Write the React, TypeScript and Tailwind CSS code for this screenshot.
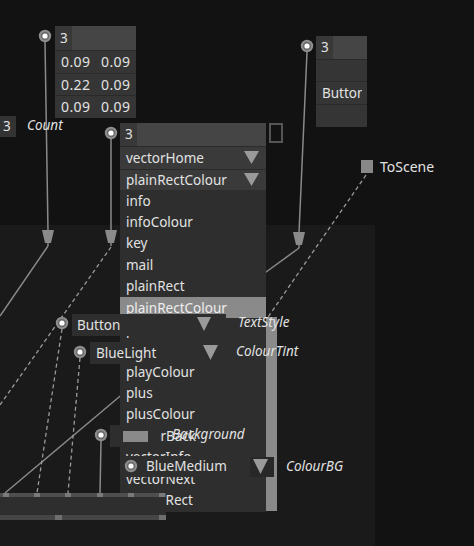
import React from "react";

const font = { fontFamily: '"Noto Sans", "DejaVu Sans", sans-serif' };

function Tri({ x, y, w = 15, h = 13 }: { x: number; y: number; w?: number; h?: number }) {
  return (
    <svg className="absolute" style={{ left: x, top: y }} width={w} height={h} viewBox={`0 0 ${w} ${h}`}>
      <polygon points={`0,0 ${w},0 ${w / 2},${h}`} fill="#9a9a9a" />
    </svg>
  );
}

const items = [
  "info",
  "infoColour",
  "key",
  "mail",
  "plainRect",
  "plainRectColour",
  "pin",
  "pinArrow",
  "playColour",
  "plus",
  "plusColour",
  "powerBack",
  "vectorInfo",
  "vectorNext",
  "vectorRect",
];

function Pin({ cx, cy }: { cx: number; cy: number }) {
  return (
    <g>
      <circle cx={cx} cy={cy} r={6.2} fill="#8e8e8e" />
      <circle cx={cx} cy={cy} r={4.2} fill="#6a6a6a" />
      <circle cx={cx} cy={cy} r={2.6} fill="#ffffff" />
    </g>
  );
}

function Arrow({ cx, ty }: { cx: number; ty: number }) {
  return <polygon points={`${cx - 6},${ty} ${cx + 6},${ty} ${cx + 3},${ty + 13} ${cx - 3},${ty + 13}`} fill="#8a8a8a" />;
}

export default function App() {
  return (
    <div className="relative w-[474px] h-[546px] overflow-hidden bg-[#121212] text-[#e2e2e2] text-[13.5px]" style={font}>
      {/* lighter canvas panel */}
      <div className="absolute left-0 top-[225px] w-[375px] h-[321px] bg-[#1a1a1a]" />

      {/* wires */}
      <svg className="absolute left-0 top-0" width={474} height={546}>
        <g stroke="#8a8a8a" strokeWidth={1.5} fill="none">
          <line x1={45} y1={42} x2={48} y2={231} />
          <line x1={111} y1={139} x2={111} y2={231} />
          <line x1={307} y1={52} x2={299} y2={233} />
          <line x1={48} y1={242} x2={48} y2={246} />
          <line x1={48} y1={246} x2={0} y2={316} />
          <line x1={111} y1={242} x2={111} y2={246} />
          <line x1={299} y1={244} x2={299} y2={248} />
          <line x1={299} y1={248} x2={262} y2={275} />
          <line x1={125} y1={392} x2={5} y2={493} />
          <line x1={101} y1={441} x2={100} y2={493} />
        </g>
        <g stroke="#9a9a9a" strokeWidth={1.3} strokeDasharray="4 3" fill="none">
          <line x1={111} y1={247} x2={0} y2={405} />
          <line x1={62} y1={329} x2={37} y2={493} />
          <line x1={80} y1={358} x2={68} y2={493} />
          <line x1={366} y1={175} x2={266} y2={320} />
        </g>
        <Arrow cx={48} ty={230} />
        <Arrow cx={111} ty={230} />
        <Arrow cx={299} ty={232} />
      </svg>

      {/* top-left vector node */}
      <div className="absolute left-[55px] top-[26px] w-[81px] flex flex-col gap-px bg-[#2a2a2a]">
        <div className="flex h-[24px] bg-[#454545]">
          <div className="w-[17px] bg-[#383838] flex items-center pl-[5px]">3</div>
        </div>
        {[
          ["0.09", "0.09"],
          ["0.22", "0.09"],
          ["0.09", "0.09"],
        ].map((r, i) => (
          <div key={i} className="flex h-[21.5px] items-center bg-[#353535] text-[14px] tracking-[0.4px]">
            <span className="w-[41px] pl-[6px]">{r[0]}</span>
            <span className="pl-[5px]">{r[1]}</span>
          </div>
        ))}
      </div>

      {/* Count node */}
      <div className="absolute left-0 top-[116px] w-[16px] h-[21px] bg-[#333333] flex items-center pl-[3px]">3</div>
      <div className="absolute left-[27px] top-[115px] italic text-[13.5px]">Count</div>

      {/* right node */}
      <div className="absolute left-[316px] top-[36px] w-[51px] flex flex-col gap-px bg-[#2a2a2a] overflow-hidden">
        <div className="flex h-[23px] bg-[#454545]">
          <div className="w-[17px] bg-[#383838] flex items-center pl-[5px]">3</div>
        </div>
        <div className="h-[21px] bg-[#353535]" />
        <div className="h-[22px] bg-[#353535] flex items-center pl-[6px]">
          <span className="w-[40px] overflow-hidden whitespace-nowrap">Button</span>
        </div>
        <div className="h-[22px] bg-[#353535]" />
      </div>

      {/* ToScene */}
      <div className="absolute left-[361px] top-[160px] w-[12px] h-[13px] bg-[#888888]" />
      <div className="absolute left-[380px] top-[156px] text-[14px]">ToScene</div>

      {/* main enum node */}
      <div className="absolute left-[120px] top-[123px] w-[146px] flex flex-col">
        <div className="flex h-[23px] bg-[#454545]">
          <div className="w-[17px] bg-[#383838] flex items-center pl-[5px]">3</div>
        </div>
        <div className="h-px bg-[#2a2a2a]" />
        <div className="relative h-[22px] bg-[#3a3a3a] flex items-center pl-[6px]">
          vectorHome
          <Tri x={124} y={4} />
        </div>
        <div className="h-px bg-[#2a2a2a]" />
        <div className="relative h-[20px] bg-[#3a3a3a] flex items-center pl-[6px]">
          plainRectColour
          <Tri x={124} y={3} />
        </div>
        <div className="flex flex-col bg-[#2e2e2e] h-[322px]">
          {items.map((it) => (
            <div
              key={it}
              className={
                it === "plainRectColour"
                  ? "h-[21.4px] shrink-0 flex items-center pl-[6px] bg-[#8a8a8a] text-[#eeeeee]"
                  : "h-[21.4px] shrink-0 flex items-center pl-[6px]"
              }
            >
              {it}
            </div>
          ))}
        </div>
      </div>
      <div className="absolute left-[269px] top-[123px] w-[14px] h-[20px] border-2 border-[#555555]" />

      {/* scrollbar */}
      <div className="absolute left-[266px] top-[317px] w-[11px] h-[194px] bg-[#8a8a8a]" />

      {/* overlay rows */}
      <div className="absolute left-[72px] top-[314px] w-[154px] h-[22px] bg-[#2e2e2e] flex items-center pl-[5px]">
        Button
        <Tri x={125} y={3} w={14} h={14} />
      </div>
      <div className="absolute left-[90px] top-[342px] w-[138px] h-[22px] bg-[#2e2e2e] flex items-center pl-[6px]">
        BlueLight
        <Tri x={113} y={3} w={15} h={15} />
      </div>
      <div className="absolute left-[110px] top-[425px] w-[50px] h-[22px] bg-[#2e2e2e]">
        <div className="absolute left-[13px] top-[6px] w-[25px] h-[11px] bg-[#8a8a8a]" />
      </div>
      <div className="absolute left-[120px] top-[456px] w-[130px] h-[21px] bg-[#2e2e2e] flex items-center pl-[26px]">
        BlueMedium
      </div>
      <div className="absolute left-[250px] top-[457px] w-[24px] h-[20px] bg-[#282828]">
        <Tri x={3} y={2} w={15} h={15} />
      </div>

      {/* bottom bar node */}
      <div className="absolute left-0 top-[493px] w-[166px] flex flex-col">
        <div className="relative h-[4px] bg-[#4e4e4e]">
          {[3, 34, 65, 97, 128, 159].map((x) => (
            <div key={x} className="absolute top-0 w-[6px] h-[4px] bg-[#7a7a7a]" style={{ left: x }} />
          ))}
        </div>
        <div className="h-[18px] bg-[#2e2e2e]" />
        <div className="relative h-[5px] bg-[#454545]">
          {[55, 159].map((x) => (
            <div key={x} className="absolute top-0 w-[7px] h-[5px] bg-[#6e6e6e]" style={{ left: x }} />
          ))}
        </div>
      </div>

      {/* labels */}
      <div className="absolute left-[238px] top-[312px] italic">TextStyle</div>
      <div className="absolute left-[236px] top-[341px] italic">ColourTint</div>
      <div className="absolute left-[172px] top-[424px] italic">Background</div>
      <div className="absolute left-[286px] top-[456px] italic">ColourBG</div>

      {/* pins */}
      <svg className="absolute left-0 top-0 pointer-events-none" width={474} height={546}>
        <Pin cx={45} cy={36} />
        <Pin cx={111} cy={133} />
        <Pin cx={307} cy={46} />
        <Pin cx={62} cy={323} />
        <Pin cx={80} cy={352} />
        <Pin cx={101} cy={435} />
        <Pin cx={131} cy={466} />
      </svg>
    </div>
  );
}
